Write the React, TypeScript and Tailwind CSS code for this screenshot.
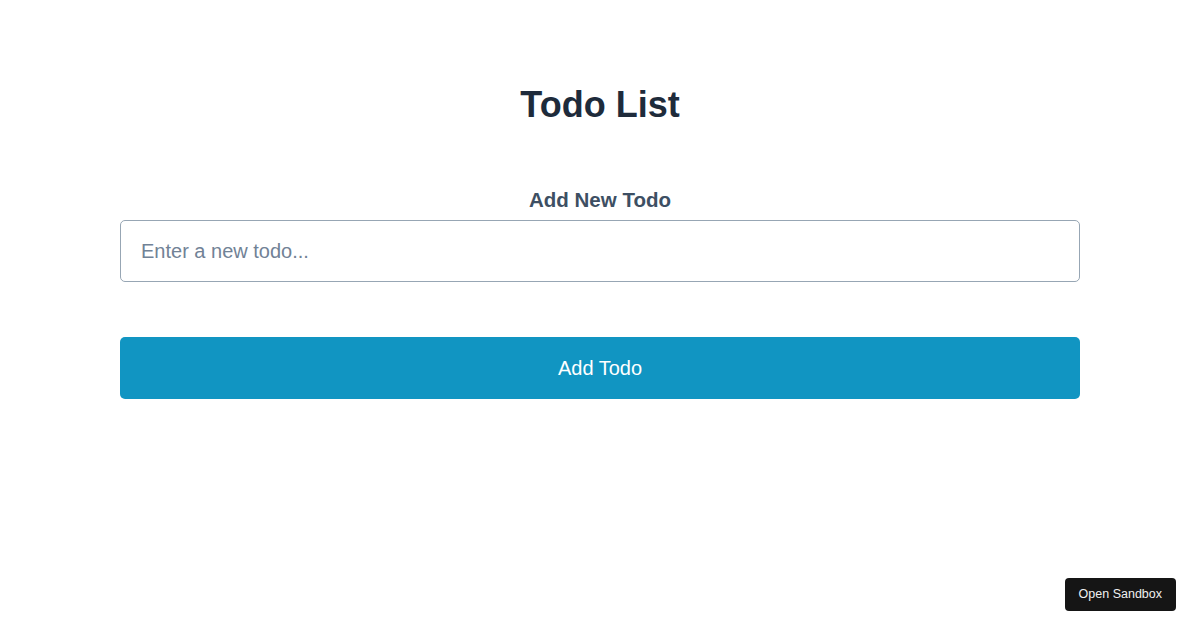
import React from 'react';

const App: React.FC = () => {
  return (
    <div className="relative min-h-[630px] bg-white font-['Liberation_Sans',Arial,sans-serif]">
      <div className="max-w-[960px] mx-auto pt-[84px]">
        <h1 className="text-center text-[36px] leading-[42px] font-bold text-[#1e2b3b]">Todo List</h1>

        <div className="mt-[62px]">
          <label className="block text-center text-[20.5px] leading-[24px] font-bold text-[#3d4f63] mb-[8px]">
            Add New Todo
          </label>
          <input
            type="text"
            placeholder="Enter a new todo..."
            className="w-full h-[62px] px-[20px] text-[20px] border border-[#97a6b4] rounded-[5px] text-[#1e2b3b] placeholder:text-[#718296] outline-none"
          />
        </div>

        <button className="mt-[55px] w-full h-[62px] bg-[#1195c2] text-white text-[20px] rounded-[5px]">
          Add Todo
        </button>
      </div>

      <button className="absolute right-[24px] bottom-[19px] h-[33px] px-[14px] bg-[#151515] text-[#f0f0f0] text-[12.5px] rounded-[4px]">
        Open Sandbox
      </button>
    </div>
  );
};

export default App;
